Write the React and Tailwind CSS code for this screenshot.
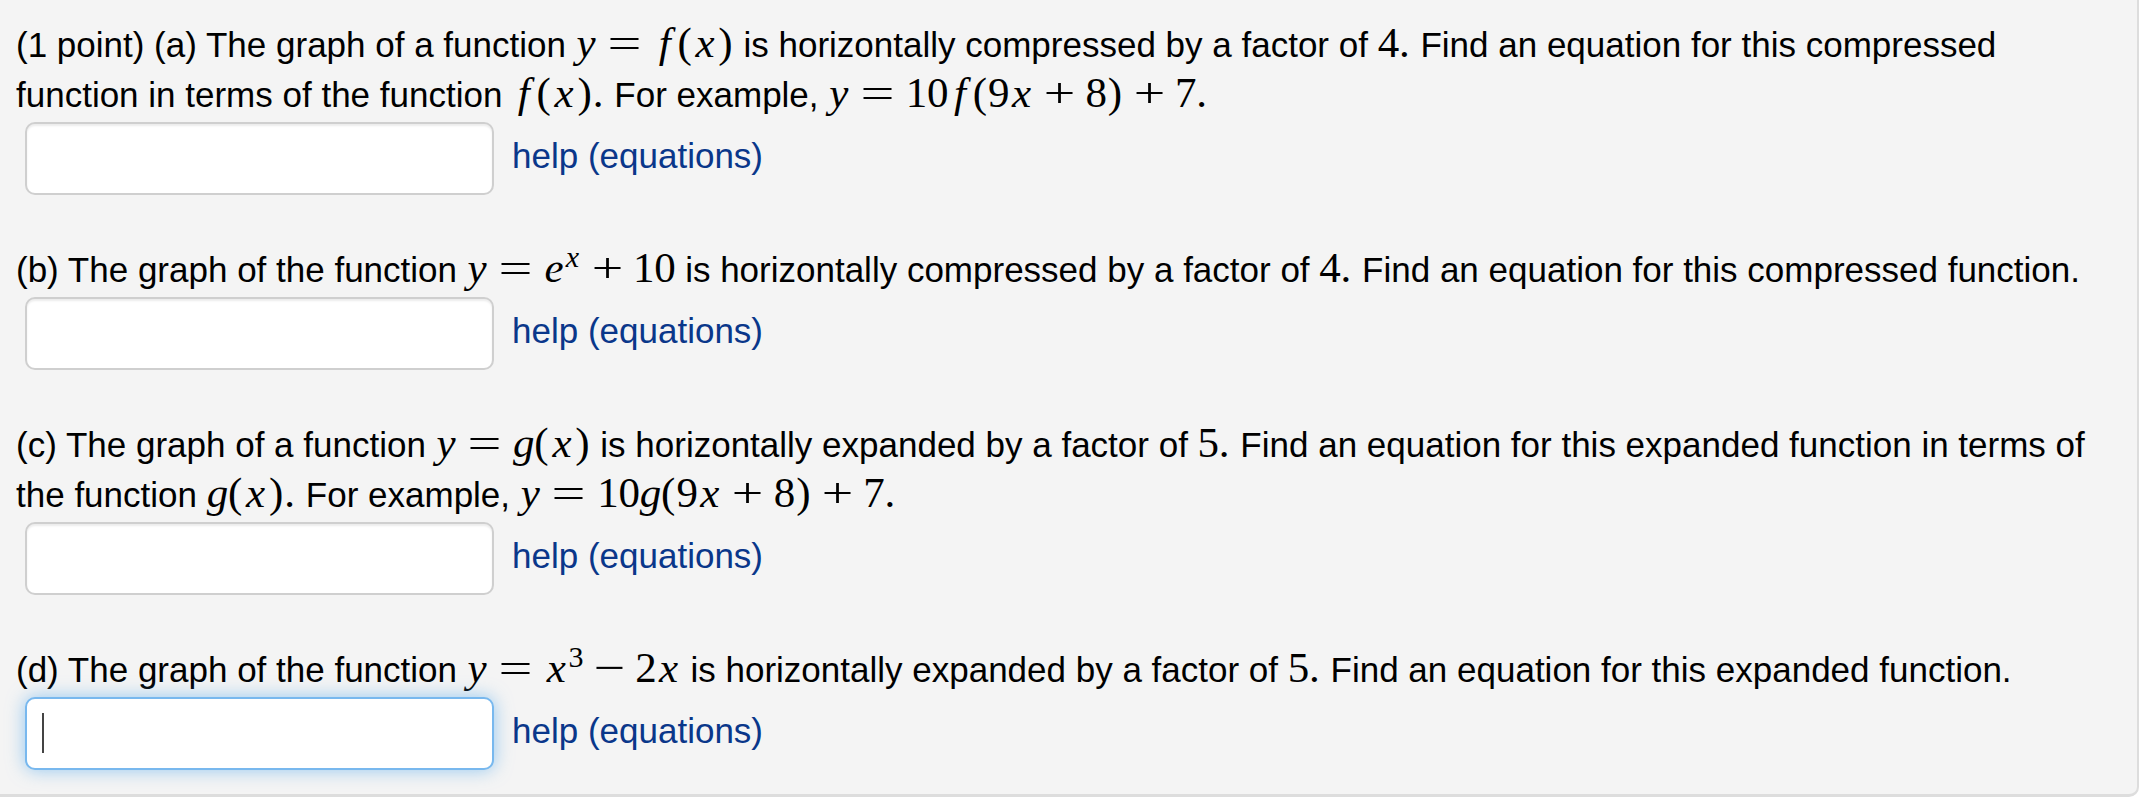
import React from 'react';

// Glyph boxes sized to TeX (Computer Modern) advance widths at ~42.5px
const LETTER = {
  y: 'w-[20.8px]',
  x: 'w-[24.3px]',
  f: 'w-[23.4px]',
  g: 'w-[20.3px]',
  e: 'w-[19.8px]',
};

const renderMath = (src) => {
  const out = [];
  for (let i = 0; i < src.length; i++) {
    const c = src[i];
    if (c === ' ') continue;
    if (c === '^') {
      const s = src[++i];
      const isDigit = /[0-9]/.test(s);
      out.push(
        <span
          key={i}
          className={`relative -top-[15px] inline-block text-center text-[30px] leading-none ${isDigit ? 'w-[15px]' : 'w-[17.2px] italic'}`}
        >
          {s}
        </span>
      );
    } else if (c === '=') {
      out.push(<span key={i} className="mx-[11.8px] inline-block w-[33px] scale-x-[1.4] text-center">=</span>);
    } else if (c === '+' || c === '−') {
      out.push(<span key={i} className="mx-[9.4px] inline-block w-[33px] scale-x-[1.3] text-center">{c}</span>);
    } else if (c === '(' || c === ')') {
      out.push(<span key={i} className="inline-block w-[16.5px] text-center">{c}</span>);
    } else if (c === '.') {
      out.push(<span key={i} className="inline-block w-[11.8px]">.</span>);
    } else if (/[0-9]/.test(c)) {
      out.push(<span key={i} className="inline-block w-[21.25px] text-center">{c}</span>);
    } else {
      out.push(<span key={i} className={`inline-block text-center italic ${LETTER[c]}`}>{c}</span>);
    }
  }
  return out;
};

const Math = ({ tex }) => (
  <span className="whitespace-nowrap font-['Liberation_Serif','DejaVu_Serif',serif] text-[43px] leading-none">
    {renderMath(tex)}
  </span>
);

const AnswerRow = ({ focused }) => (
  <div className="mt-[2px] flex items-center">
    <div className="relative ml-[9px]">
      <input
        type="text"
        readOnly
        className={
          focused
            ? 'h-[73px] w-[469px] rounded-[10px] border-2 border-[#78b8ee] bg-white px-4 shadow-[0_0_18px_rgba(82,168,236,0.6)] outline-none'
            : 'h-[73px] w-[469px] rounded-[10px] border-2 border-[#cfcfcf] bg-white px-4 shadow-[inset_0_2px_2px_rgba(0,0,0,0.075)] outline-none'
        }
      />
      {focused && <span className="absolute left-[17px] top-[16px] h-[40px] w-[2px] bg-[#444]" />}
    </div>
    <a href="#" className="mb-[5px] ml-[18px] text-[35px] leading-[50px] text-[#0a378a]">
      help (equations)
    </a>
  </div>
);

const Problem = ({ parts, focused }) => (
  <div>
    <p className="m-0">
      {parts.map((p, i) => (p.startsWith('$') ? <Math key={i} tex={p.slice(1)} /> : <span key={i}>{p}</span>))}
    </p>
    <AnswerRow focused={focused} />
  </div>
);

const problems = [
  [
    '(1 point) (a) The graph of a function ',
    '$y=f(x)',
    ' is horizontally compressed by a factor of ',
    '$4.',
    ' Find an equation for this compressed function in terms of the function ',
    '$f(x).',
    ' For example, ',
    '$y=10f(9x+8)+7.',
  ],
  [
    '(b) The graph of the function ',
    '$y=e^x+10',
    ' is horizontally compressed by a factor of ',
    '$4.',
    ' Find an equation for this compressed function.',
  ],
  [
    '(c) The graph of a function ',
    '$y=g(x)',
    ' is horizontally expanded by a factor of ',
    '$5.',
    ' Find an equation for this expanded function in terms of the function ',
    '$g(x).',
    ' For example, ',
    '$y=10g(9x+8)+7.',
  ],
  [
    '(d) The graph of the function ',
    '$y=x^3−2x',
    ' is horizontally expanded by a factor of ',
    '$5.',
    ' Find an equation for this expanded function.',
  ],
];

export default function App() {
  return (
    <div className="min-h-screen bg-white font-['Liberation_Sans',Arial,sans-serif] text-[35px] leading-[50px] text-black">
      <div className="flex w-[2139px] flex-col gap-[50px] rounded-br-[10px] border-r-2 border-b-[3px] border-[#dddddd] bg-[#f4f4f4] pt-[20px] pr-[19px] pb-[24px] pl-[16px]">
        {problems.map((parts, i) => (
          <Problem key={i} parts={parts} focused={i === 3} />
        ))}
      </div>
    </div>
  );
}
